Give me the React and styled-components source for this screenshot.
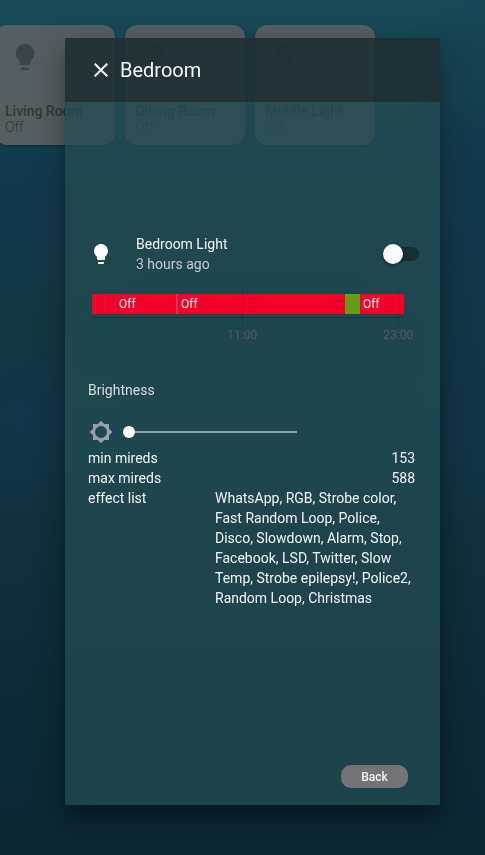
import React, { useState } from 'react';
import styled, { createGlobalStyle } from 'styled-components';

// Global Styles
const GlobalStyle = createGlobalStyle`
  *,
  *::before,
  *::after {
    box-sizing: border-box;
  }

  body {
    margin: 0;
    font-family: Roboto, 'Noto Sans', sans-serif;
    font-size: 14px;
    line-height: 20px;
    background-color: #0e2c38;
    color: #f3f6f6;
    -webkit-font-smoothing: antialiased;
  }
`;

// Dashboard behind the dialog
const Page = styled.main`
  min-height: 100vh;
  padding-top: 25px;
  overflow: hidden;
  background:
    radial-gradient(ellipse 160px 110px at 5% 25%, rgba(17, 55, 76, 0.8), transparent),
    radial-gradient(ellipse 160px 110px at 5% 48%, rgba(16, 54, 74, 0.7), transparent),
    radial-gradient(ellipse 150px 300px at 104% 30%, rgba(17, 54, 75, 0.9), transparent),
    linear-gradient(180deg, #184b57 0%, #174751 12%, #12404e 19%, #11383f 38%, #103542 50%, #0f303c 64%, #0d2b37 82%, #0d2733 100%);
`;

const Board = styled.div`
  display: grid;
  grid-template-columns: repeat(3, 120px);
  gap: 10px;
  margin-left: -5px;
`;

const RoomCard = styled.button`
  display: flex;
  flex-direction: column;
  align-items: flex-start;
  height: 120px;
  padding: 16px 10px 10px;
  border: 0;
  border-radius: 12px;
  background: #555e61;
  box-shadow: 0 1px 3px rgba(0, 0, 0, 0.3);
  color: #31393b;
  font: inherit;
  line-height: 16px;
  text-align: left;
`;

const RoomIcon = styled.svg`
  width: 32px;
  height: 32px;
  margin-left: 4px;
  fill: #3b4547;
`;

const RoomName = styled.span`
  margin-top: auto;
  font-weight: 500;
  white-space: nowrap;
`;

const RoomState = styled.span`
  font-weight: 300;
`;

// Dialog Styles
const Overlay = styled.div`
  position: fixed;
  inset: 0;
  display: flex;
  padding: 38px 45px 50px 65px;
  overflow: auto;
`;

const Dialog = styled.section`
  flex: 1;
  display: flex;
  flex-direction: column;
  min-width: 0;
  border-radius: 2px;
  background: rgba(35, 75, 81, 0.78);
  box-shadow:
    0 11px 15px -7px rgba(0, 0, 0, 0.3),
    0 12px 30px 3px rgba(0, 0, 0, 0.3);
`;

const DialogHeader = styled.header`
  display: flex;
  align-items: center;
  gap: 7px;
  height: 64px;
  padding: 0 24px;
  background: rgba(30, 33, 36, 0.6);
`;

const CloseButton = styled.button`
  display: flex;
  padding: 0;
  border: 0;
  background: none;
  color: #ffffff;
`;

const DialogTitle = styled.h1`
  margin: 0;
  font-size: 20px;
  font-weight: 400;
  line-height: 24px;
`;

const DialogBody = styled.div`
  flex: 1;
  display: flex;
  flex-direction: column;
  padding: 132px 25px 17px 23px;
`;

const Icon = styled.svg`
  flex: none;
  width: 24px;
  height: 24px;
  fill: ${(props) => props.$color || '#ffffff'};
`;

const EntityRow = styled.div`
  display: flex;
  align-items: center;
  gap: 23px;
  padding-left: 1px;
`;

const EntityText = styled.label`
  flex: 1;
  display: flex;
  flex-direction: column;
`;

const Secondary = styled.span`
  color: #c2cccd;
`;

const Switch = styled.input`
  appearance: none;
  display: flex;
  align-items: center;
  width: 36px;
  height: 14px;
  margin: 0 -4px 0 0;
  border-radius: 7px;
  background: #162f35;

  &::before {
    content: '';
    flex: none;
    width: 20px;
    height: 20px;
    border-radius: 50%;
    background: #fafafa;
    box-shadow: 0 1px 4px rgba(0, 0, 0, 0.5);
  }

  &:checked {
    justify-content: flex-end;
  }
`;

// History Styles
const Timeline = styled.div`
  position: relative;
  height: 53px;
  margin: 16px 11px 0 4px;
  padding-top: 4px;
`;

const Bars = styled.div`
  display: flex;
  height: 24px;
  padding-bottom: 3px;
  border-bottom: 1px solid #17373d;
`;

const Segment = styled.span`
  flex: ${(props) => props.$size} 0 0;
  min-width: 0;
  background: ${(props) => props.$color};
  font-size: 12px;
  text-indent: 3px;
  white-space: nowrap;
`;

const Tick = styled.span`
  position: absolute;
  top: 0;
  width: 1px;
  height: 37px;
  background: rgba(0, 0, 0, 0.12);
`;

const TickLabel = styled.span`
  position: absolute;
  top: 37px;
  left: 50%;
  transform: translateX(-50%);
  color: #58595c;
  font-size: 12px;
  line-height: 16px;
`;

// Brightness Styles
const SliderLabel = styled.label`
  margin-top: 37px;
  color: #d5dede;
`;

const SliderRow = styled.div`
  display: flex;
  align-items: center;
  gap: 10px;
  margin: 20px 0 4px;
  padding-left: 1px;
`;

const Slider = styled.input`
  appearance: none;
  flex: 0 1 174px;
  min-width: 0;
  height: 2px;
  margin: 0;
  background: #8fa3a6;

  &::-webkit-slider-thumb {
    appearance: none;
    width: 12px;
    height: 12px;
    border-radius: 50%;
    background: #ffffff;
  }
`;

const Attributes = styled.dl`
  display: flex;
  flex-direction: column;
  margin: 0;
`;

const Attribute = styled.div`
  display: flex;
  justify-content: space-between;
`;

const AttributeValue = styled.dd`
  max-width: 200px;
  margin: 0;
`;

const BackButton = styled.button`
  align-self: flex-end;
  width: 67px;
  height: 23px;
  margin: auto 7px 0 0;
  padding: 0;
  border: 0;
  border-radius: 10px;
  background: #737477;
  color: #f3f3f3;
  font-family: inherit;
  font-size: 12px;
  font-weight: 500;
`;

const BULB =
  'M12,2A7,7 0 0,0 5,9C5,11.38 6.19,13.47 8,14.74V17A1,1 0 0,0 9,18H15A1,1 0 0,0 16,17V14.74C17.81,13.47 19,11.38 19,9A7,7 0 0,0 12,2M9,21A1,1 0 0,0 10,22H14A1,1 0 0,0 15,21V20H9V21Z';
const CLOSE =
  'M19,6.41L17.59,5L12,10.59L6.41,5L5,6.41L10.59,12L5,17.59L6.41,19L12,13.41L17.59,19L19,17.59L13.41,12L19,6.41Z';
const BRIGHTNESS =
  'M12,18A6,6 0 0,1 6,12A6,6 0 0,1 12,6A6,6 0 0,1 18,12A6,6 0 0,1 12,18M20,15.31L23.31,12L20,8.69V4H15.31L12,0.69L8.69,4H4V8.69L0.69,12L4,15.31V20H8.69L12,23.31L15.31,20H20V15.31Z';

const RED = '#f50029';
const GREEN = '#629f17';

const rooms = ['Living Room', 'Dining Room', 'Middle Light'];

const history = [
  { size: 3, color: RED },
  { size: 1, color: '#b0371f' },
  { size: 9, color: RED },
  { size: 1, color: '#b0371f' },
  { size: 9, color: RED },
  { size: 1, color: '#b0371f' },
  { size: 60, color: RED, label: 'Off' },
  { size: 2, color: '#c93a56' },
  { size: 167, color: RED, label: 'Off' },
  { size: 15, color: GREEN },
  { size: 44, color: RED, label: 'Off' },
];

const ticks = [
  { at: 48, label: '11:00' },
  { at: 98, label: '23:00' },
];

const attributes = [
  { name: 'min mireds', value: '153' },
  { name: 'max mireds', value: '588' },
  {
    name: 'effect list',
    value:
      'WhatsApp, RGB, Strobe color, Fast Random Loop, Police, Disco, Slowdown, Alarm, Stop, Facebook, LSD, Twitter, Slow Temp, Strobe epilepsy!, Police2, Random Loop, Christmas',
  },
];

const App = () => {
  const [on, setOn] = useState(false);
  const [brightness, setBrightness] = useState(0);

  return (
    <>
      <GlobalStyle />
      <Page>
        <Board>
          {rooms.map((room) => (
            <RoomCard key={room}>
              <RoomIcon viewBox="0 0 24 24">
                <path d={BULB} />
              </RoomIcon>
              <RoomName>{room}</RoomName>
              <RoomState>Off</RoomState>
            </RoomCard>
          ))}
        </Board>
      </Page>

      <Overlay>
        <Dialog role="dialog" aria-labelledby="dialog-title">
          <DialogHeader>
            <CloseButton aria-label="Close">
              <Icon viewBox="0 0 24 24">
                <path d={CLOSE} />
              </Icon>
            </CloseButton>
            <DialogTitle id="dialog-title">Bedroom</DialogTitle>
          </DialogHeader>

          <DialogBody>
            <EntityRow>
              <Icon viewBox="0 0 24 24">
                <path d={BULB} />
              </Icon>
              <EntityText htmlFor="bedroom-light">
                <span>Bedroom Light</span>
                <Secondary>3 hours ago</Secondary>
              </EntityText>
              <Switch
                id="bedroom-light"
                type="checkbox"
                role="switch"
                checked={on}
                onChange={(e) => setOn(e.target.checked)}
              />
            </EntityRow>

            {/* State history */}
            <Timeline>
              <Bars>
                {history.map((item, i) => (
                  <Segment key={i} $size={item.size} $color={item.color}>
                    {item.label}
                  </Segment>
                ))}
              </Bars>
              {ticks.map((tick) => (
                <Tick key={tick.at} style={{ left: `${tick.at}%` }}>
                  <TickLabel>{tick.label}</TickLabel>
                </Tick>
              ))}
            </Timeline>

            {/* Brightness */}
            <SliderLabel htmlFor="brightness">Brightness</SliderLabel>
            <SliderRow>
              <Icon viewBox="0 0 24 24" $color="#8fa3a6">
                <path d={BRIGHTNESS} />
              </Icon>
              <Slider
                id="brightness"
                type="range"
                min="0"
                max="255"
                value={brightness}
                onChange={(e) => setBrightness(Number(e.target.value))}
              />
            </SliderRow>

            <Attributes>
              {attributes.map((item) => (
                <Attribute key={item.name}>
                  <dt>{item.name}</dt>
                  <AttributeValue>{item.value}</AttributeValue>
                </Attribute>
              ))}
            </Attributes>

            <BackButton>Back</BackButton>
          </DialogBody>
        </Dialog>
      </Overlay>
    </>
  );
};

export default App;
